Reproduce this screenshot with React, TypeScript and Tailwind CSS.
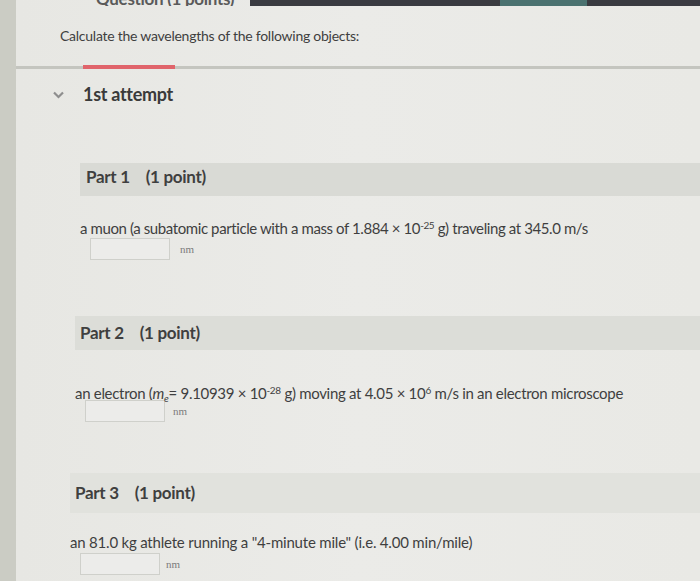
import React from "react";

const font = { fontFamily: "Lato, 'Open Sans', sans-serif" };

function Part({
  num,
  band,
  body,
  input,
  children,
}: {
  num: string;
  band: string;
  body: string;
  input: string;
  children: React.ReactNode;
}) {
  return (
    <div>
      <div className={band}>
        <span className="text-[17px] font-bold text-[#3f3f3f] tracking-[-0.3px]">
          Part {num}
        </span>
        <span className="text-[17px] font-bold text-[#3f3f3f] tracking-[-0.3px]">
          (1 point)
        </span>
      </div>
      <div className={body}>{children}</div>
      <div className={input}>
        <div className="w-[80px] h-[22px] border border-[#cfd0cb] bg-[#ececea]" />
        <span
          className="text-[11px] text-[#7b7b7b]"
          style={{ fontFamily: "'Liberation Serif', serif" }}
        >
          nm
        </span>
      </div>
    </div>
  );
}

export default function App() {
  return (
    <div
      className="w-[700px] h-[581px] overflow-hidden flex bg-[#e8e8e4]"
      style={font}
    >
      <div className="w-[16px] h-full bg-[#cbccc4] shrink-0" />
      <div className="flex-1 h-full flex flex-col bg-gradient-to-r from-[#e7e7e3] via-[#ebebe8] to-[#e9e9e5]">
        {/* top cropped header */}
        <div className="relative h-[8px] shrink-0">
          <div className="absolute left-[234px] right-0 top-0 h-[6px] bg-[#3a3b41] flex">
            <div className="ml-[250px] w-[87px] h-full bg-[#4b7270]" />
          </div>
          <div className="h-[6px] overflow-hidden pl-[80px]">
            <div className="mt-[-14px] text-[17px] font-bold text-[#5a5a5a] tracking-[-0.3px]">
              Question (1 points)
            </div>
          </div>
        </div>
        <div className="h-[58px] shrink-0 pl-[44px] pt-[17px] text-[14px] text-[#3f3f3f] tracking-[-0.25px]">
          Calculate the wavelengths of the following objects:
        </div>
        <div className="h-[3px] bg-[#c4c5bf] shrink-0 flex">
          <div className="ml-[67px] w-[92px] h-[4px] -mt-[1px] bg-[#e0646b]" />
        </div>
        <div className="flex items-center h-[45px] pt-[6px] pl-[37px] gap-[19px]">
          <svg width="11" height="8" viewBox="0 0 11 8">
            <path
              d="M1 1.5 L5.5 6 L10 1.5"
              fill="none"
              stroke="#8e8e8e"
              strokeWidth="2.2"
            />
          </svg>
          <span className="text-[18px] font-bold text-[#3a3a3a] tracking-[-0.3px]">
            1st attempt
          </span>
        </div>

        <div className="mt-[49px]">
          <Part
            num="1"
            band="ml-[64px] h-[33px] bg-[#d9dad5] flex items-center gap-[16px] pl-[6px] pb-[5px]"
            body="ml-[64px] mt-[23px] text-[15px] text-[#3f3f3f] tracking-[-0.4px] leading-[18px]"
            input="ml-[74px] mt-[1px] flex items-center gap-[10px]"
          >
            a muon (a subatomic particle with a mass of 1.884 × 10
            <sup className="text-[10px]">-25</sup> g) traveling at 345.0 m/s
          </Part>
        </div>

        <div className="mt-[56px]">
          <Part
            num="2"
            band="ml-[59px] h-[34px] bg-[#dcddd8] flex items-center gap-[16px] pl-[5px]"
            body="ml-[59px] mt-[34px] text-[15px] text-[#3f3f3f] tracking-[-0.3px] leading-[18px]"
            input="ml-[69px] -mt-[2px] flex items-center gap-[8px]"
          >
            an electron (<i>m</i>
            <sub className="text-[10px] italic">e</sub>= 9.10939 × 10
            <sup className="text-[10px]">-28</sup> g) moving at 4.05 × 10
            <sup className="text-[10px]">6</sup> m/s in an electron microscope
          </Part>
        </div>

        <div className="mt-[51px]">
          <Part
            num="3"
            band="ml-[54px] h-[40px] bg-[#e1e2dd] flex items-center gap-[16px] pl-[5px]"
            body="ml-[54px] mt-[20px] text-[15px] text-[#3f3f3f] tracking-[-0.2px] leading-[18px]"
            input="ml-[64px] mt-[2px] flex items-center gap-[6px]"
          >
            an 81.0 kg athlete running a "4-minute mile" (i.e. 4.00 min/mile)
          </Part>
        </div>
      </div>
    </div>
  );
}
